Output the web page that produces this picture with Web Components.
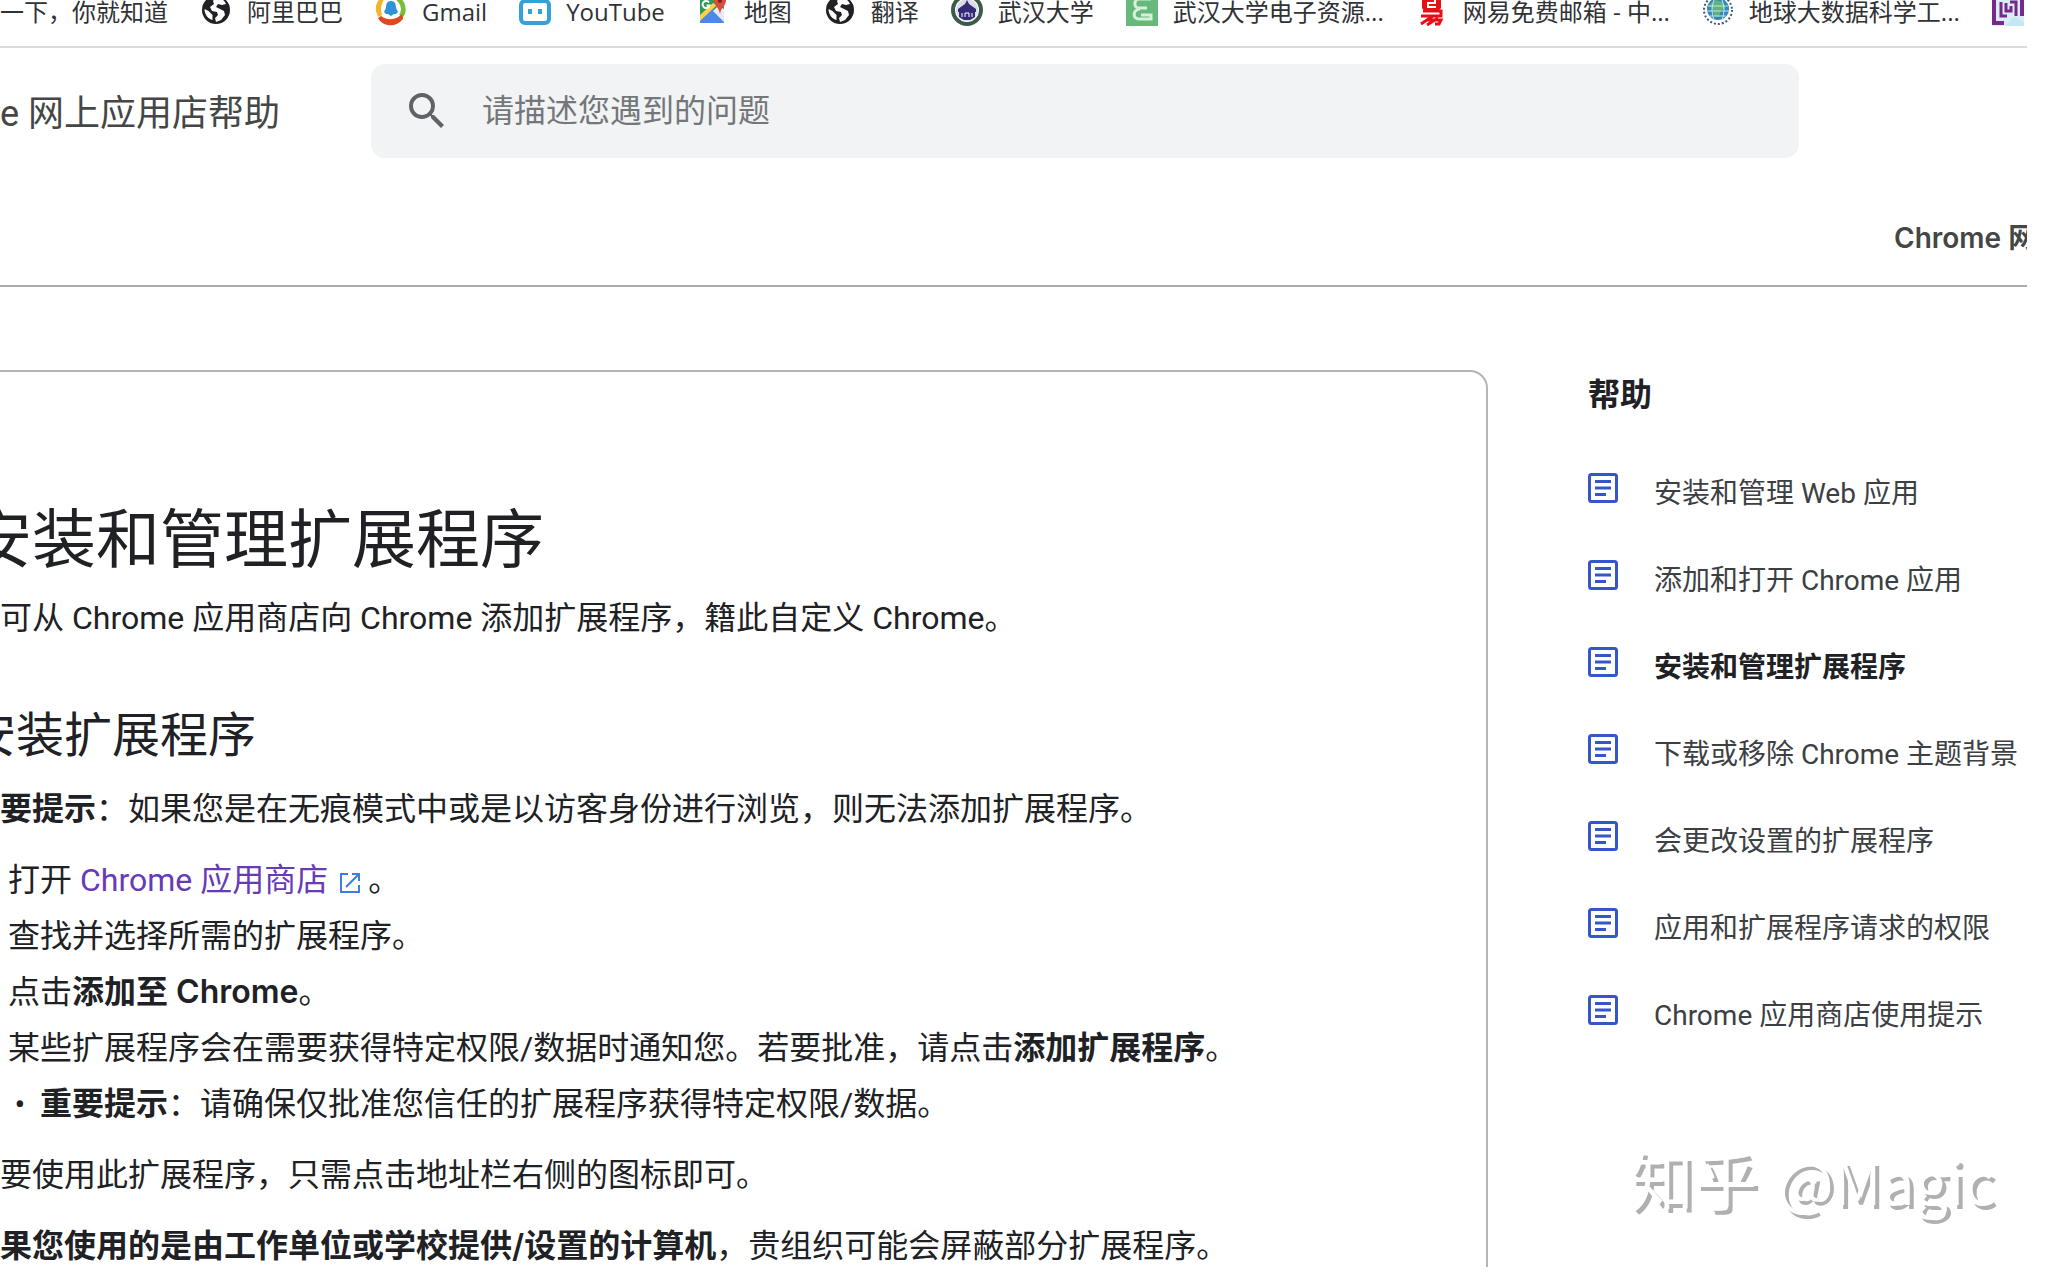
<!DOCTYPE html>
<html lang="zh-CN">
<head>
<meta charset="utf-8">
<title>安装和管理扩展程序 - Chrome 网上应用店帮助</title>
<style>
  body {
    margin: 0;
    background: #fff;
    color: #202124;
    font-family: Roboto, "Noto Sans CJK SC", sans-serif;
    overflow: hidden;
  }
</style>
</head>
<body>
<help-page>
  <bookmark-bar slot="bookmarks">
    <bookmark-item>百度一下，你就知道</bookmark-item>
    <bookmark-item icon="globe">阿里巴巴</bookmark-item>
    <bookmark-item icon="mail">Gmail</bookmark-item>
    <bookmark-item icon="tv">YouTube</bookmark-item>
    <bookmark-item icon="map">地图</bookmark-item>
    <bookmark-item icon="globe">翻译</bookmark-item>
    <bookmark-item icon="crest">武汉大学</bookmark-item>
    <bookmark-item icon="library">武汉大学电子资源...</bookmark-item>
    <bookmark-item icon="netease">网易免费邮箱 - 中...</bookmark-item>
    <bookmark-item icon="earth">地球大数据科学工...</bookmark-item>
    <bookmark-item icon="maze"></bookmark-item>
  </bookmark-bar>
  <site-header slot="header">Chrome 网上应用店帮助</site-header>
  <help-article>
    <span slot="title">安装和管理扩展程序</span>
  </help-article>
  <help-sidebar slot="sidebar">
    <side-link>安装和管理 Web 应用</side-link>
    <side-link>添加和打开 Chrome 应用</side-link>
    <side-link current>安装和管理扩展程序</side-link>
    <side-link>下载或移除 Chrome 主题背景</side-link>
    <side-link>会更改设置的扩展程序</side-link>
    <side-link>应用和扩展程序请求的权限</side-link>
    <side-link>Chrome 应用商店使用提示</side-link>
  </help-sidebar>
</help-page>
<water-mark>知乎<span slot="author">@Magic</span></water-mark>

<script>
const icons = {
  globe: `<circle cx="16" cy="16" r="14" fill="#202124"/>
    <path d="M15 4c4-1 9 1 11 6l-4 1-4-1-2 3 4 2 4 2 1 4-4 5-5 2-1-4 3-3-1-3-5-1-2-4 4-3-1-3z" fill="#fff"/>
    <path d="M4.500 15l4 2 4 4 0 5c-4-1-8-5-8-11z" fill="#fff"/>`,
  mail: `<path d="M13 1C4 3 0 9 1 17l2 6 4-2C5 13 7 6 13 1z" fill="#f5b324"/>
    <path d="M15 1c11-1 18 9 15 19l-3 5-3-5c3-7-1-14-9-19z" fill="#78be3c"/>
    <path d="M3 24c5 9 18 10 25 1l-1-5c-6 6-14 7-21 2z" fill="#e2481d"/>
    <circle cx="16" cy="15" r="10" fill="#fff"/>
    <path d="M16 7c4 0 5 3 5 7l2 4-2 2h-2l-3 2-3-2h-2l-2-2 2-4c0-4 1-7 5-7z" fill="#2d92d8"/>`,
  tv: `<path d="M9 3l4 4M23 3l-4 4" stroke="#36a1d6" stroke-width="3"/>
    <rect x="2" y="7" width="28" height="22" rx="4" fill="#fff" stroke="#36a1d6" stroke-width="4"/>
    <path d="M11 15v5M21 15v5" stroke="#36a1d6" stroke-width="4"/>`,
  map: `<rect x="3" y="3" width="24" height="26" rx="2" fill="#2f9a55"/>
    <path d="M3 27L16 15l11 12v2H3z" fill="#4e86ef"/>
    <path d="M3 21v6L20 11l-4-2z" fill="#fbd04b"/>
    <path d="M16 17l11 11V15l-6-3z" fill="#e8eaed"/>
    <path d="M12 8.500a3.500 3.500 0 1 0 .5 3h-3" fill="none" stroke="#fff" stroke-width="2"/>
    <path d="M17 6a6 6 0 0 1 12 0c0 6-5 7-6 14-1-7-6-8-6-14z" fill="#dd4b3e"/><circle cx="23" cy="7" r="2" fill="#7b231e"/>`,
  crest: `<circle cx="16" cy="16" r="14" fill="#fff" stroke="#3b5a49" stroke-width="4"/>
    <circle cx="16" cy="16" r="11" fill="#dcdbe6"/>
    <path d="M16 6l2 4 7 5v3H7v-3l7-5zM8 18h16v5l-5 3h-6l-5-3z" fill="#332a78"/>
    <path d="M11 19v4M14 23v-4h4v4M21 19v4" fill="none" stroke="#fff" stroke-width="1"/>`,
  library: `<path d="M0 0h32v32H0z" fill="#67b97b"/>
    <path d="M25 5H13c-5 0-6 9 0 9h8m-7 1c-7 0-8 10-1 10h12v-4H15" fill="none" stroke="#d7f0dc" stroke-width="3"/>`,
  netease: `<rect x="6" y="1" width="19" height="15" rx="3" fill="#e60f17"/>
    <path d="M12 5h7v4h-7v4h8" fill="none" stroke="#fff" stroke-width="2"/>
    <path d="M7 17h18v5H5M10 26h15l-2 4h-4M17 22L5 30M22 24L11 31" fill="none" stroke="#e60f17" stroke-width="3"/>`,
  earth: `<circle cx="16" cy="16" r="14" fill="none" stroke="#4a5576" stroke-width="2" stroke-dasharray="2 2"/>
    <circle cx="16" cy="15" r="11" fill="#3187b9"/><path d="M7 11l6-5 8 2 3 6-5 2-2 7-5-1-1-6z" fill="#65b17b"/>
    <path d="M6 12h20M5 17h22M8 22h16M12 6q-4 10 0 20M20 6q4 10 0 20" fill="none" stroke="#bde5ee" stroke-width="1"/>`,
  maze: `<path d="M0 0h32v32H0z" fill="#d8edf7"/><path d="M2 2v27h10M30 4v18" fill="none" stroke="#782888" stroke-width="4"/>
    <path d="M9 8v14h6M24 22V8h-6M14 9v8h5v-5" fill="none" stroke="#782888" stroke-width="3"/>
    <path d="M13 32l9-9 10 5v4z" fill="#c4e6f5"/>`
};

// Attach an open shadow root and fill it
function render(host, html) {
  host.attachShadow({ mode: 'open' }).innerHTML = html;
}

class HelpPage extends HTMLElement {
  connectedCallback() {
    render(this, `
      <style>
        :host { display: flex; flex-direction: column; height: calc(100vh - 13px); margin-right: 21px; overflow: hidden; }
        main { display: flex; gap: 100px; padding-top: 83px; }
      </style>
      <slot name="bookmarks"></slot>
      <slot name="header"></slot>
      <main><slot></slot><slot name="sidebar"></slot></main>
    `);
  }
}

class BookmarkBar extends HTMLElement {
  connectedCallback() {
    render(this, `
      <style>
        :host { display: block; flex: none; border-bottom: 2px solid #dadada; overflow: hidden; }
        /* the window's top edge cuts the first pixels of the row */
        nav { display: flex; gap: 32px; margin: -6px 0 20px -48px; }
      </style>
      <nav aria-label="书签"><slot></slot></nav>
    `);
  }
}

class BookmarkItem extends HTMLElement {
  connectedCallback() {
    const icon = icons[this.getAttribute('icon')];
    render(this, `
      <style>
        :host { display: block; flex: none; }
        a {
          display: flex; align-items: center; gap: 15px; height: 32px;
          color: #303236; text-decoration: none; white-space: nowrap;
          font: 24px/32px "Open Sans", "Noto Sans CJK SC", sans-serif;
        }
        svg { width: 32px; height: 32px; }
        span { padding-top: 3px; }
      </style>
      <a href="#">${icon ? `<svg viewBox="0 0 32 32" aria-hidden="true">${icon}</svg>` : ''}<span><slot></slot></span></a>
    `);
  }
}

class SiteHeader extends HTMLElement {
  connectedCallback() {
    render(this, `
      <style>
        :host { display: block; flex: none; border-bottom: 2px solid #aaacac; color: #444746; }
        .top { display: flex; align-items: center; padding: 16px 228px 0 0; }
        .brand {
          display: flex; justify-content: flex-end; flex: none; width: 280px; margin-right: 91px; padding-top: 5px;
          color: inherit; text-decoration: none; white-space: nowrap; font-size: 36px; line-height: 48px;
        }
        form { display: flex; align-items: center; gap: 31px; flex: 1; height: 94px; padding: 0 32px; box-sizing: border-box; border-radius: 14px; background: #f1f3f4; }
        button { display: flex; padding: 0; border: 0; background: none; }
        button svg { width: 48px; height: 48px; fill: #5f6368; }
        input { flex: 1; padding: 0; border: 0; outline: 0; background: none; font: inherit; font-size: 32px; line-height: 48px; }
        input::placeholder { color: #747779; }
        .tabs { display: flex; justify-content: flex-end; padding: 60px 0 27px; }
        .tabs a {
          flex: 0 0 133px; overflow: hidden; white-space: nowrap; color: inherit; text-decoration: none;
          font: 600 28px/40px Inter, "Noto Sans CJK SC", sans-serif;
        }
      </style>
      <div class="top">
        <a class="brand" href="#"><slot></slot></a>
        <form role="search">
          <button type="button" aria-label="搜索"><svg viewBox="0 0 24 24"><path d="M15.500 14h-.79l-.28-.27A6.470 6.470 0 0 0 16 9.500 6.500 6.500 0 1 0 9.500 16c1.610 0 3.090-.59 4.230-1.570l.27.28v.79l5 4.990L20.490 19l-4.990-5zm-6 0C7.010 14 5 11.990 5 9.500S7.010 5 9.500 5 14 7.010 14 9.500 11.990 14 9.500 14z"/></svg></button>
          <input type="text" aria-label="搜索帮助" placeholder="请描述您遇到的问题">
        </form>
      </div>
      <nav class="tabs"><a href="#">Chrome 网上应用店</a></nav>
    `);
  }
}

class HelpArticle extends HTMLElement {
  connectedCallback() {
    render(this, `
      <style>
        :host {
          display: block; flex: 1; min-width: 0; margin-left: -114px; padding: 129px 80px 60px;
          border: 2px solid #b4b6b6; border-radius: 18px; font-size: 32px; line-height: 56px; white-space: nowrap;
        }
        h1, h2, p, ol, ul { margin: 0; padding: 0; font-weight: 400; }
        h1 { margin-bottom: 9px; font-size: 64px; line-height: 80px; }
        h2 { margin-top: 60px; font-size: 48px; line-height: 60px; }
        h2 ~ p, ol { margin-top: 15px; }
        ol { padding-left: 40px; list-style: none; }
        ul { list-style: none; }
        ul li { display: flex; gap: 8px; }
        ul li::before { content: "•"; width: 24px; text-align: center; }
        strong { font-family: Inter, "Noto Sans CJK SC", sans-serif; font-weight: 600; }
        a { color: #673ab7; text-decoration: none; }
        svg { width: 20px; height: 20px; margin: 0 8px 0 12px; vertical-align: -2px; }
      </style>
      <h1><slot name="title"></slot></h1>
      <p>您可从 Chrome 应用商店向 Chrome 添加扩展程序，籍此自定义 Chrome。</p>
      <h2>安装扩展程序</h2>
      <p><strong>重要提示</strong>：如果您是在无痕模式中或是以访客身份进行浏览，则无法添加扩展程序。</p>
      <ol>
        <li>打开 <a href="#">Chrome 应用商店<svg viewBox="0 0 20 20" fill="none" stroke="#3f7be6" stroke-width="2" aria-hidden="true"><path d="M8 1H1v18h18v-7M12 1h7v7M19 1L6 14"/></svg></a>。</li>
        <li>查找并选择所需的扩展程序。</li>
        <li>点击<strong>添加至 Chrome</strong>。</li>
        <li>某些扩展程序会在需要获得特定权限/数据时通知您。若要批准，请点击<strong>添加扩展程序</strong>。
          <ul><li><span><strong>重要提示</strong>：请确保仅批准您信任的扩展程序获得特定权限/数据。</span></li></ul>
        </li>
      </ol>
      <p>若要使用此扩展程序，只需点击地址栏右侧的图标即可。</p>
      <p><strong>如果您使用的是由工作单位或学校提供/设置的计算机</strong>，贵组织可能会屏蔽部分扩展程序。</p>
    `);
  }
}

class HelpSidebar extends HTMLElement {
  connectedCallback() {
    render(this, `
      <style>
        :host { display: block; flex: 0 0 439px; }
        h2 { margin: 5px 0 35px; font-size: 32px; line-height: 40px; font-weight: 700; }
      </style>
      <h2>帮助</h2>
      <nav aria-label="帮助"><slot></slot></nav>
    `);
  }
}

class SideLink extends HTMLElement {
  connectedCallback() {
    render(this, `
      <style>
        :host { display: block; color: #3c4043; }
        :host([current]) { color: #202124; font-weight: 700; }
        a {
          display: flex; align-items: flex-start; gap: 36px; height: 87px; padding-top: 23px; box-sizing: border-box;
          color: inherit; text-decoration: none; white-space: nowrap; font-size: 28px; line-height: 42px;
        }
        svg { flex: none; width: 30px; height: 30px; fill: none; stroke: #3556c8; }
      </style>
      <a href="#">
        <svg viewBox="0 0 30 30" aria-hidden="true"><rect x="1.500" y="1.500" width="27" height="27" rx="2" stroke-width="3"/><path d="M7 8.500h16M7 15h16M7 21.500h11" stroke-width="3"/></svg>
        <span><slot></slot></span>
      </a>
    `);
  }
}

// Stamp over the bottom right corner of the page
class WaterMark extends HTMLElement {
  connectedCallback() {
    render(this, `
      <style>
        :host {
          position: absolute; right: 54px; bottom: 60px; display: flex; align-items: baseline; gap: 20px;
          color: #fff; text-shadow: 4px 4px 0 #b0b0b0;
          font: 64px/80px "Noto Sans CJK SC", sans-serif; white-space: nowrap; pointer-events: none;
        }
        .author { font-size: 59px; }
      </style>
      <span><slot></slot></span>
      <span class="author"><slot name="author"></slot></span>
    `);
  }
}

customElements.define('help-page', HelpPage);
customElements.define('bookmark-bar', BookmarkBar);
customElements.define('bookmark-item', BookmarkItem);
customElements.define('site-header', SiteHeader);
customElements.define('help-article', HelpArticle);
customElements.define('help-sidebar', HelpSidebar);
customElements.define('side-link', SideLink);
customElements.define('water-mark', WaterMark);
</script>
</body>
</html>
